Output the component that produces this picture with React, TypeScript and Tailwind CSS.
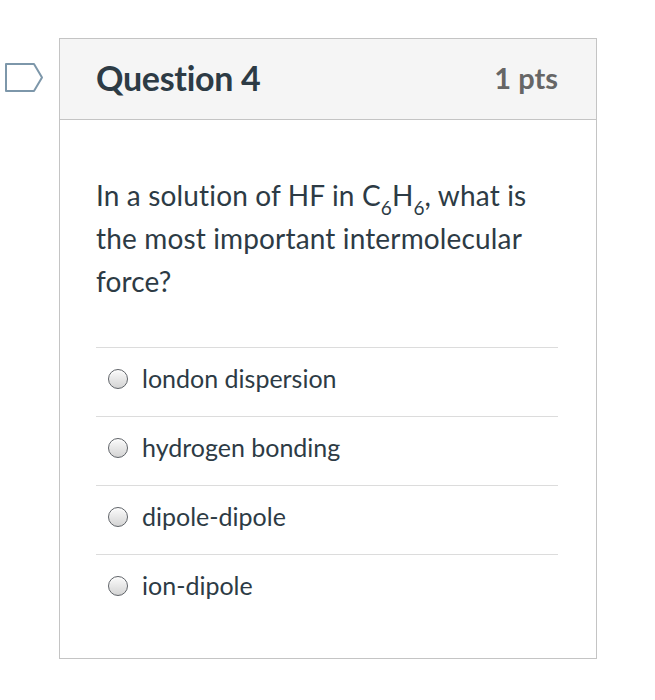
import React from 'react';

const answers = ['london dispersion', 'hydrogen bonding', 'dipole-dipole', 'ion-dipole'];

const Radio: React.FC = () => (
  <span className="inline-block shrink-0 w-[20px] h-[20px] rounded-full border border-[#5f6368] bg-gradient-to-b from-[#fbfbfb] to-[#d4d4d4] shadow-[inset_0_1px_1px_rgba(255,255,255,0.9)]" />
);

const App: React.FC = () => {
  return (
    <div className="w-[655px] h-[700px] bg-white relative" style={{ fontFamily: 'Lato, "Noto Sans", sans-serif' }}>
      {/* bookmark flag */}
      <svg className="absolute left-[4px] top-[62px]" width="40" height="31" viewBox="0 0 40 31">
        <path d="M2 2 H30 L38 15.5 L30 29 H2 Z" fill="none" stroke="#7d97aa" strokeWidth="2" strokeLinejoin="round" />
      </svg>

      <div className="pt-[38px] pl-[59px]">
        <div className="w-[538px] h-[621px] border border-[#c4c4c4] flex flex-col">
          {/* Header */}
          <div className="h-[81px] bg-[#f5f5f5] border-b border-[#c4c4c4] flex items-center justify-between pl-[36px] pr-[38px] pb-[3px]">
            <span className="text-[34px] font-bold text-[#2d3b45] tracking-[-0.3px]">Question 4</span>
            <span className="text-[29px] font-bold text-[#666666]">1 pts</span>
          </div>

          {/* Body */}
          <div className="pl-[36px] pr-[38px] pt-[54px]">
            <p className="text-[28px] leading-[43px] text-[#2d3b45] tracking-[0.15px]">
              In a solution of HF in C<sub className="text-[19px] align-[-4px]">6</sub>H<sub className="text-[19px] align-[-4px]">6</sub>, what is
              <br />
              the most important intermolecular
              <br />
              force?
            </p>

            <div className="mt-[44px]">
              {answers.map((a) => (
                <div key={a} className="border-t border-[#dcdcdc] h-[69px] flex items-center pl-[12px] gap-[14px] pb-[6px]">
                  <Radio />
                  <span className="text-[25px] text-[#2d3b45]">{a}</span>
                </div>
              ))}
            </div>
          </div>
        </div>
      </div>
    </div>
  );
};

export default App;
